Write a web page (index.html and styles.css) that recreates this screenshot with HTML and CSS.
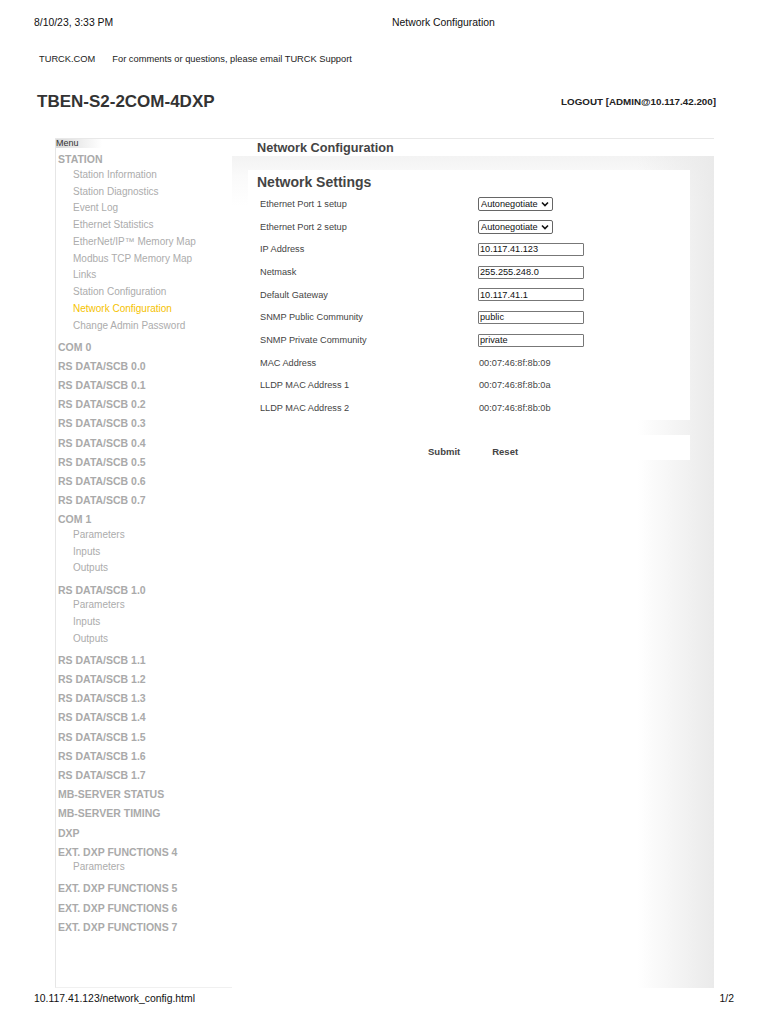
FILE: index.html
```html
<!DOCTYPE html>
<html lang="en">
<head>
<meta charset="utf-8">
<title>Network Configuration</title>
<link rel="stylesheet" href="styles.css">
</head>
<body>
<header class="print-head">
  <span class="print-date">8/10/23, 3:33 PM</span>
  <span class="print-title">Network Configuration</span>
</header>
<div class="links">
  <a class="link-home">TURCK.COM</a>
  <span class="link-support">For comments or questions, please email TURCK Support</span>
</div>
<div class="titlebar">
  <h1 class="device">TBEN-S2-2COM-4DXP</h1>
  <a class="logout">LOGOUT [ADMIN@10.117.42.200]</a>
</div>
<main class="main">
  <nav class="menu">
    <div class="menu-label">Menu</div>
    <ul class="menu-list">
      <li><span class="group-title">STATION</span>
        <ul class="sub">
          <li>Station Information</li>
          <li>Station Diagnostics</li>
          <li>Event Log</li>
          <li>Ethernet Statistics</li>
          <li>EtherNet/IP™ Memory Map</li>
          <li>Modbus TCP Memory Map</li>
          <li>Links</li>
          <li>Station Configuration</li>
          <li class="active">Network Configuration</li>
          <li>Change Admin Password</li>
        </ul>
      </li>
      <li><span class="group-title">COM 0</span></li>
      <li><span class="group-title">RS DATA/SCB 0.0</span></li>
      <li><span class="group-title">RS DATA/SCB 0.1</span></li>
      <li><span class="group-title">RS DATA/SCB 0.2</span></li>
      <li><span class="group-title">RS DATA/SCB 0.3</span></li>
      <li><span class="group-title">RS DATA/SCB 0.4</span></li>
      <li><span class="group-title">RS DATA/SCB 0.5</span></li>
      <li><span class="group-title">RS DATA/SCB 0.6</span></li>
      <li><span class="group-title">RS DATA/SCB 0.7</span></li>
      <li><span class="group-title">COM 1</span>
        <ul class="sub">
          <li>Parameters</li>
          <li>Inputs</li>
          <li>Outputs</li>
        </ul>
      </li>
      <li><span class="group-title">RS DATA/SCB 1.0</span>
        <ul class="sub">
          <li>Parameters</li>
          <li>Inputs</li>
          <li>Outputs</li>
        </ul>
      </li>
      <li><span class="group-title">RS DATA/SCB 1.1</span></li>
      <li><span class="group-title">RS DATA/SCB 1.2</span></li>
      <li><span class="group-title">RS DATA/SCB 1.3</span></li>
      <li><span class="group-title">RS DATA/SCB 1.4</span></li>
      <li><span class="group-title">RS DATA/SCB 1.5</span></li>
      <li><span class="group-title">RS DATA/SCB 1.6</span></li>
      <li><span class="group-title">RS DATA/SCB 1.7</span></li>
      <li><span class="group-title">MB-SERVER STATUS</span></li>
      <li><span class="group-title">MB-SERVER TIMING</span></li>
      <li><span class="group-title">DXP</span></li>
      <li><span class="group-title">EXT. DXP FUNCTIONS 4</span>
        <ul class="sub">
          <li>Parameters</li>
        </ul>
      </li>
      <li><span class="group-title">EXT. DXP FUNCTIONS 5</span></li>
      <li><span class="group-title">EXT. DXP FUNCTIONS 6</span></li>
      <li><span class="group-title">EXT. DXP FUNCTIONS 7</span></li>
    </ul>
  </nav>
  <section class="content">
    <h2 class="page-title">Network Configuration</h2>
    <div class="panel">
      <form class="settings">
        <h3 class="settings-title">Network Settings</h3>
        <div class="rows">
          <label class="lbl">Ethernet Port 1 setup</label>
          <div class="val"><span class="sel-wrap"><select class="sel"><option>Autonegotiate</option></select><svg class="chev" width="8" height="6" viewBox="0 0 8 6"><path d="M1 1.5 L4 4.5 L7 1.5" fill="none" stroke="#111" stroke-width="1.6"/></svg></span></div>
          <label class="lbl">Ethernet Port 2 setup</label>
          <div class="val"><span class="sel-wrap"><select class="sel"><option>Autonegotiate</option></select><svg class="chev" width="8" height="6" viewBox="0 0 8 6"><path d="M1 1.5 L4 4.5 L7 1.5" fill="none" stroke="#111" stroke-width="1.6"/></svg></span></div>
          <label class="lbl">IP Address</label>
          <div class="val"><input class="txt" type="text" value="10.117.41.123"></div>
          <label class="lbl">Netmask</label>
          <div class="val"><input class="txt" type="text" value="255.255.248.0"></div>
          <label class="lbl">Default Gateway</label>
          <div class="val"><input class="txt" type="text" value="10.117.41.1"></div>
          <label class="lbl">SNMP Public Community</label>
          <div class="val"><input class="txt" type="text" value="public"></div>
          <label class="lbl">SNMP Private Community</label>
          <div class="val"><input class="txt" type="text" value="private"></div>
          <span class="lbl">MAC Address</span>
          <span class="val mac">00:07:46:8f:8b:09</span>
          <span class="lbl">LLDP MAC Address 1</span>
          <span class="val mac">00:07:46:8f:8b:0a</span>
          <span class="lbl">LLDP MAC Address 2</span>
          <span class="val mac">00:07:46:8f:8b:0b</span>
        </div>
      </form>
      <div class="actions">
        <button class="btn" type="button">Submit</button>
        <button class="btn" type="button">Reset</button>
      </div>
    </div>
  </section>
</main>
<footer class="print-foot">
  <span>10.117.41.123/network_config.html</span>
  <span>1/2</span>
</footer>
</body>
</html>
```
FILE: styles.css
```css
* { box-sizing: border-box; }
html, body { margin: 0; padding: 0; background: #fff; }
body {
  width: 768px;
  height: 1024px;
  overflow: hidden;
  font-family: "Liberation Sans", Arial, sans-serif;
  color: #222;
}

/* print header */
.print-head {
  display: grid;
  grid-template-columns: 358px 1fr;
  height: 46px;
  padding: 17px 0 0 34px;
  font-size: 10.4px;
  line-height: 12px;
  color: #111;
}

.links {
  height: 26px;
  padding: 0 0 0 39px;
  display: flex;
  align-items: center;
  font-size: 9.3px;
  color: #222;
}
.link-home { margin-right: 17px; }

.titlebar {
  height: 66px;
  padding: 20px 52px 0 37px;
  display: flex;
  justify-content: space-between;
  align-items: flex-start;
}
.device {
  margin: 0;
  font-size: 17px;
  line-height: 20px;
  font-weight: bold;
  color: #333;
}
.logout {
  font-size: 9.8px;
  line-height: 20px;
  font-weight: bold;
  color: #222;
}

/* main area */
.main {
  margin-left: 55px;
  width: 659px;
  height: 850px;
  border-top: 1px solid #e8e8e8;
  display: flex;
}

.menu {
  width: 177px;
  flex: none;
  border-left: 1px solid #e6e6e6;
  border-bottom: 1px solid #f0f0f0;
}
.menu-label {
  height: 9px;
  line-height: 9px;
  font-size: 9px;
  color: #333;
  width: 46px;
  background: linear-gradient(to right, #d8d8d8, #ececec 50%, #fff);
}
.menu-list, .sub {
  list-style: none;
  margin: 0;
  padding: 0;
}
.menu-list { margin-top: -1.2px; }
.sub { padding-top: 0.8px; }
.group-title {
  display: block;
  padding: 6.4px 0 0.8px 2px;
  line-height: 12px;
  font-size: 10.5px;
  font-weight: bold;
  color: #aaa;
  white-space: nowrap;
}
.sub li {
  height: 16.75px;
  line-height: 16.75px;
  padding-left: 17px;
  font-size: 10px;
  color: #acacac;
  white-space: nowrap;
}
.sub li.active { color: #f5c200; }

/* content */
.content {
  width: 482px;
  flex: none;
  display: flex;
  flex-direction: column;
}
.page-title {
  margin: 0;
  height: 17px;
  line-height: 18px;
  padding-left: 25px;
  font-size: 12.7px;
  font-weight: bold;
  color: #444;
}
.panel {
  flex: 1;
  padding: 14px 24px 0 16px;
  background:
    linear-gradient(to right, rgba(255,255,255,0) 84%, #eaeaea 100%),
    linear-gradient(to bottom, #f3f3f3 0, #fafafa 20px, #fff 50px),
    #fff;
}
.settings {
  height: 250px;
  background: #fff;
  margin: 0;
}
.settings-title {
  margin: 0;
  padding: 4px 0 0 9px;
  line-height: 16px;
  height: 22.6px;
  font-size: 14px;
  font-weight: bold;
  color: #444;
}
.rows {
  display: grid;
  grid-template-columns: 218px 1fr;
  grid-auto-rows: 22.7px;
  align-items: center;
  padding-left: 12px;
}
.lbl {
  font-size: 9.2px;
  color: #444;
  white-space: nowrap;
}
.val { display: flex; align-items: center; }
.mac {
  font-size: 9.2px;
  color: #444;
  padding-left: 1px;
}
.sel-wrap {
  position: relative;
  display: inline-block;
  height: 14px;
}
.sel {
  appearance: none;
  -webkit-appearance: none;
  font-family: "Liberation Sans", Arial, sans-serif;
  font-size: 9.2px;
  height: 14px;
  width: 75px;
  padding: 0 12px 0 2px;
  margin: 0;
  border: 1px solid #666;
  border-radius: 2px;
  color: #111;
  background: #fff;
  display: block;
}
.chev {
  position: absolute;
  right: 4px;
  top: 4px;
  pointer-events: none;
}
.txt {
  font-family: "Liberation Sans", Arial, sans-serif;
  font-size: 9.2px;
  height: 13px;
  width: 106px;
  padding: 0 1px;
  margin: 0;
  border: 1px solid #777;
  border-radius: 1px;
  color: #111;
}

.actions {
  margin-top: 15px;
  height: 25px;
  background: #fff;
  display: flex;
  align-items: flex-end;
  padding: 0 0 3px 180px;
  gap: 32px;
}
.btn {
  background: none;
  border: none;
  padding: 0;
  line-height: 11px;
  font-family: "Liberation Sans", Arial, sans-serif;
  font-size: 9.5px;
  font-weight: bold;
  color: #444;
}

.print-foot {
  display: flex;
  justify-content: space-between;
  padding: 5px 34px 0 34px;
  font-size: 10.4px;
  line-height: 12px;
  color: #111;
}
```
